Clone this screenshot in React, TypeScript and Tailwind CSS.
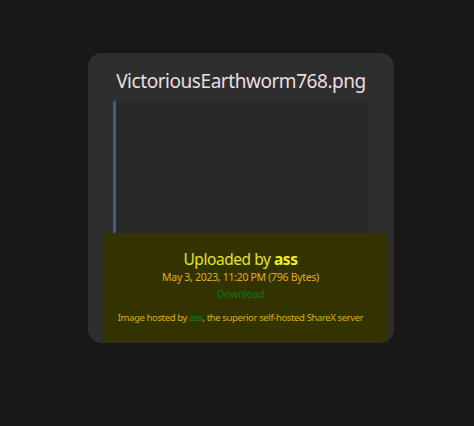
export default function App() {
  return (
    <div className="w-[474px] h-[426px] bg-[#181818] overflow-hidden" style={{ fontFamily: '"Noto Sans", "Open Sans", sans-serif' }}>
      <div className="pt-[53px] pl-[88px]">
        <div className="relative w-[306px] h-[290px] rounded-[14px] bg-[#2e2e2e] flex flex-col items-center">
          <div className="mt-[14px] text-[19px] leading-[28px] tracking-[-0.45px] text-[#ecdde0]">VictoriousEarthworm768.png</div>
          <div className="mt-[6px] ml-[-2px] w-[255px] h-[200px] bg-[#282828] border-l-[3px] border-[#3e5d7a]"></div>
          <div className="absolute left-[16px] top-[180px] w-[284px] h-[109px] bg-[#333300] flex flex-col items-center pr-[11px]">
            <div className="mt-[15px] text-[15.5px] leading-[22px] tracking-[-0.45px] text-[#e3e32a]">
              Uploaded by <span className="font-bold text-[#f2f21a]">ass</span>
            </div>
            <div className="text-[10.5px] leading-[15px] tracking-[-0.3px] text-[#e0ad20]">May 3, 2023, 11:20 PM (796 Bytes)</div>
            <div className="mt-[2px] text-[10.5px] leading-[15px] tracking-[-0.3px] text-[#0c7a0c]">Download</div>
            <div className="mt-[9px] text-[9.5px] leading-[14px] tracking-[-0.37px] text-[#dcad20]">
              Image hosted by <span className="text-[#0c8a0c]">ass</span>, the superior self-hosted ShareX server
            </div>
          </div>
        </div>
      </div>
    </div>
  );
}
